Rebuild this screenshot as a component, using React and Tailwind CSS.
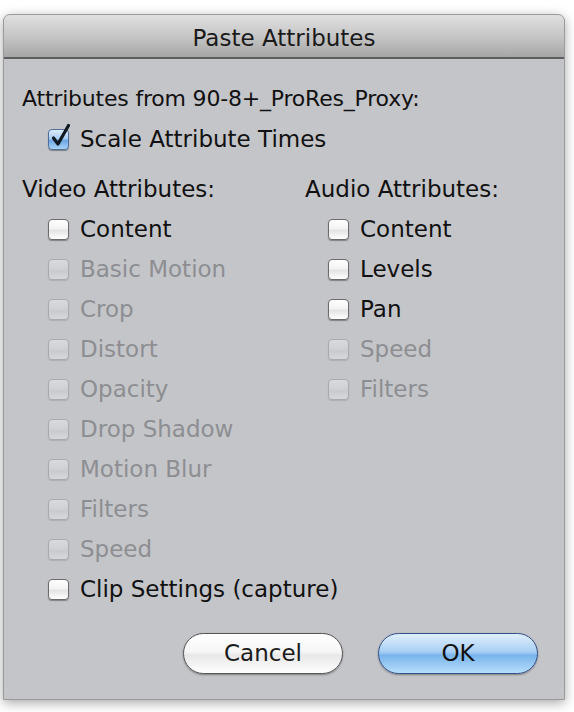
import React from "react";

const font = { fontFamily: '"DejaVu Sans", Verdana, sans-serif' };

function Box({ state }) {
  if (state === "checked") {
    return (
      <div className="relative w-[21px] h-[21px] shrink-0">
        <div className="absolute inset-0 rounded-[4px] border border-[#4f6f99] bg-[linear-gradient(to_bottom,#dcecfb_0%,#a9cdf2_45%,#6ea6e3_55%,#a8d3f7_100%)] shadow-[0_1px_1px_rgba(0,0,0,0.35)]" />
        <svg className="absolute left-[2px] top-[-6px]" width="22" height="26" viewBox="0 0 22 26">
          <path d="M3.5 15 L8 21 L18.5 2.5" fill="none" stroke="#101820" strokeWidth="3.2" strokeLinecap="round" strokeLinejoin="round" />
        </svg>
      </div>
    );
  }
  if (state === "disabled") {
    return (
      <div className="w-[21px] h-[21px] shrink-0 rounded-[4px] border border-[#a9aaae] bg-[linear-gradient(to_bottom,#d9dadd_0%,#cfd0d3_50%,#c9cacd_55%,#d6d7da_100%)] shadow-[0_1px_1px_rgba(0,0,0,0.12)]" />
    );
  }
  return (
    <div className="w-[21px] h-[21px] shrink-0 rounded-[4px] border border-[#6c6c6c] bg-[linear-gradient(to_bottom,#ffffff_0%,#f4f4f4_45%,#e4e4e4_55%,#ffffff_100%)] shadow-[0_1px_1px_rgba(0,0,0,0.35)]" />
  );
}

function Row({ label, state, indent = "ml-[26px]" }) {
  const disabled = state === "disabled";
  return (
    <div className={`flex items-center h-[40px] ${indent}`}>
      <Box state={state} />
      <span className={`ml-[11px] text-[23px] leading-none whitespace-nowrap ${disabled ? "text-[#8d8e92]" : "text-[#111]"}`}>
        {label}
      </span>
    </div>
  );
}

const video = [
  ["Content", "on"],
  ["Basic Motion", "disabled"],
  ["Crop", "disabled"],
  ["Distort", "disabled"],
  ["Opacity", "disabled"],
  ["Drop Shadow", "disabled"],
  ["Motion Blur", "disabled"],
  ["Filters", "disabled"],
  ["Speed", "disabled"],
  ["Clip Settings (capture)", "on"],
];

const audio = [
  ["Content", "on"],
  ["Levels", "on"],
  ["Pan", "on"],
  ["Speed", "disabled"],
  ["Filters", "disabled"],
];

export default function App() {
  return (
    <div className="w-[574px] h-[712px] bg-white pt-[14px] pl-[3px]" style={font}>
      <div className="w-[562px] h-[686px] flex flex-col rounded-t-[7px] overflow-hidden border border-[#9a9a9a] shadow-[0_3px_12px_rgba(0,0,0,0.35)] bg-[#c4c5c9]">
        <div className="h-[44px] shrink-0 flex items-center justify-center bg-[linear-gradient(to_bottom,#e0e0e0_0%,#c6c6c6_50%,#a6a6a6_100%)] border-b-2 border-[#5e5e5e]">
          <span className="text-[23px] text-[#1a1a1a] leading-none pt-[5px]">Paste Attributes</span>
        </div>
        <div className="flex flex-col pt-[20px] pl-[18px] flex-1">
          <div className="h-[40px] flex items-center text-[22px] tracking-[-0.2px] text-[#111] leading-none whitespace-nowrap">
            Attributes from 90-8+_ProRes_Proxy:
          </div>
          <Row label="Scale Attribute Times" state="checked" indent="ml-[26px]" />
          <div className="flex mt-[10px]">
            <div className="w-[283px] flex flex-col">
              <div className="h-[40px] flex items-center text-[23px] text-[#111] leading-none whitespace-nowrap">Video Attributes:</div>
              {video.map(([l, s]) => (
                <Row key={"v" + l} label={l} state={s} />
              ))}
            </div>
            <div className="flex flex-col">
              <div className="h-[40px] flex items-center text-[23px] text-[#111] leading-none whitespace-nowrap">Audio Attributes:</div>
              {audio.map(([l, s]) => (
                <Row key={"a" + l} label={l} state={s} indent="ml-[23px]" />
              ))}
            </div>
          </div>
          <div className="flex justify-end gap-[35px] pr-[26px] mt-[24px]">
            <button className="w-[160px] h-[41px] rounded-full border border-[#555] bg-[linear-gradient(to_bottom,#ffffff_0%,#f6f6f6_45%,#e8e8e8_55%,#ffffff_100%)] shadow-[0_1px_2px_rgba(0,0,0,0.35)] text-[23px] text-[#1a1a1a] leading-none">
              Cancel
            </button>
            <button className="w-[160px] h-[41px] rounded-full border border-[#33508a] bg-[linear-gradient(to_bottom,#e0effc_0%,#a9d0f4_45%,#79b5ec_55%,#b7defb_100%)] shadow-[0_1px_2px_rgba(0,0,0,0.35)] text-[23px] text-[#111] leading-none">
              OK
            </button>
          </div>
        </div>
      </div>
    </div>
  );
}
